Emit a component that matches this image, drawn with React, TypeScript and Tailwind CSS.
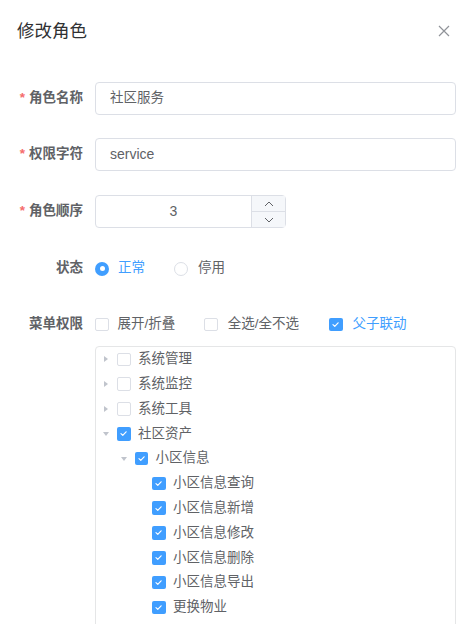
import React from "react";

const FONT = '"Liberation Sans", "Noto Sans CJK SC", sans-serif';

type Node = { label: string; level: number; arrow: "right" | "down" | "none"; checked: boolean };

const tree: Node[] = [
  { label: "系统管理", level: 0, arrow: "right", checked: false },
  { label: "系统监控", level: 0, arrow: "right", checked: false },
  { label: "系统工具", level: 0, arrow: "right", checked: false },
  { label: "社区资产", level: 0, arrow: "down", checked: true },
  { label: "小区信息", level: 1, arrow: "down", checked: true },
  { label: "小区信息查询", level: 2, arrow: "none", checked: true },
  { label: "小区信息新增", level: 2, arrow: "none", checked: true },
  { label: "小区信息修改", level: 2, arrow: "none", checked: true },
  { label: "小区信息删除", level: 2, arrow: "none", checked: true },
  { label: "小区信息导出", level: 2, arrow: "none", checked: true },
  { label: "更换物业", level: 2, arrow: "none", checked: true },
];

function Checkbox({ checked }: { checked: boolean }) {
  if (checked) {
    return (
      <span className="flex h-[13.5px] w-[13.5px] shrink-0 items-center justify-center rounded-[2px] bg-[#409eff]">
        <svg width="9" height="9" viewBox="0 0 10 10" fill="none">
          <path d="M2.2 5.2 L4.2 7.1 L7.9 3.1" stroke="white" strokeWidth="1.3" strokeLinecap="round" strokeLinejoin="round" />
        </svg>
      </span>
    );
  }
  return <span className="h-[13.5px] w-[13.5px] shrink-0 rounded-[2px] border border-[#dcdfe6] bg-white" />;
}

function Label({ text, required }: { text: string; required?: boolean }) {
  return (
    <div className="flex h-[33px] w-[77px] shrink-0 items-center justify-end pr-[12px] text-[13.5px] font-bold text-[#606266]">
      {required && <span className="mr-[4px] text-[#f56c6c]">*</span>}
      {text}
    </div>
  );
}

function Arrow({ dir }: { dir: "right" | "down" | "none" }) {
  if (dir === "none") return <span className="w-[12px] shrink-0" />;
  return (
    <span className="flex w-[12px] shrink-0 items-center justify-center">
      <svg width="8" height="8" viewBox="0 0 8 8">
        {dir === "right" ? <path d="M2 1 L6 4 L2 7 Z" fill="#c0c4cc" /> : <path d="M1 2 L7 2 L4 6 Z" fill="#c0c4cc" />}
      </svg>
    </span>
  );
}

export default function App() {
  return (
    <div className="h-[624px] w-[474px] overflow-hidden bg-white" style={{ fontFamily: FONT }}>
      {/* 标题 */}
      <div className="flex items-center justify-between px-[17px] pt-[19px]">
        <span className="text-[17.5px] leading-[24px] text-[#303133]">修改角色</span>
        <svg width="12" height="12" viewBox="0 0 12 12" className="mr-[7px]">
          <path d="M1 1 L11 11 M11 1 L1 11" stroke="#909399" strokeWidth="1.2" />
        </svg>
      </div>

      <div className="px-[18px] pt-[39px]">
        {/* 角色名称 */}
        <div className="flex">
          <Label text="角色名称" required />
          <div className="flex h-[33px] flex-1 items-center rounded-[4px] border border-[#dcdfe6] px-[14px] text-[13.5px] text-[#606266]">
            社区服务
          </div>
        </div>

        {/* 权限字符 */}
        <div className="mt-[23px] flex">
          <Label text="权限字符" required />
          <div className="flex h-[33px] flex-1 items-center rounded-[4px] border border-[#dcdfe6] px-[14px] text-[14px] text-[#606266]">
            service
          </div>
        </div>

        {/* 角色顺序 */}
        <div className="mt-[24px] flex">
          <Label text="角色顺序" required />
          <div className="flex h-[33px] w-[191px] rounded-[4px] border border-[#dcdfe6]">
            <div className="flex flex-1 items-center justify-center text-[14px] text-[#606266]">3</div>
            <div className="flex w-[34px] flex-col border-l border-[#dcdfe6] bg-[#f5f7fa]">
              <div className="flex flex-1 items-center justify-center border-b border-[#dcdfe6]">
                <svg width="10" height="6" viewBox="0 0 10 6">
                  <path d="M1 5 L5 1 L9 5" stroke="#606266" strokeWidth="1" fill="none" />
                </svg>
              </div>
              <div className="flex flex-1 items-center justify-center">
                <svg width="10" height="6" viewBox="0 0 10 6">
                  <path d="M1 1 L5 5 L9 1" stroke="#606266" strokeWidth="1" fill="none" />
                </svg>
              </div>
            </div>
          </div>
        </div>

        {/* 状态 */}
        <div className="mt-[24px] flex">
          <Label text="状态" />
          <div className="flex h-[33px] items-center text-[13.5px]">
            <span className="flex h-[14px] w-[14px] items-center justify-center rounded-full bg-[#409eff]">
              <span className="h-[5px] w-[5px] rounded-full bg-white" />
            </span>
            <span className="ml-[9px] text-[#409eff]">正常</span>
            <span className="ml-[29px] h-[14px] w-[14px] rounded-full border border-[#dcdfe6]" />
            <span className="ml-[10px] text-[#606266]">停用</span>
          </div>
        </div>

        {/* 菜单权限 */}
        <div className="mt-[23px] flex">
          <Label text="菜单权限" />
          <div className="flex-1">
            <div className="flex h-[33px] items-center text-[13.5px] text-[#606266]">
              <Checkbox checked={false} />
              <span className="ml-[9px]">展开/折叠</span>
              <span className="ml-[29px]" />
              <Checkbox checked={false} />
              <span className="ml-[10px]">全选/全不选</span>
              <span className="ml-[30px]" />
              <Checkbox checked />
              <span className="ml-[10px] text-[#409eff]">父子联动</span>
            </div>
            <div className="mt-[5px] h-[400px] rounded-[4px] border border-[#e5e6e7] bg-white">
              {tree.map((n) => (
                <div
                  key={n.label}
                  className="flex h-[24.8px] items-center text-[13.5px] text-[#606266]"
                  style={{ paddingLeft: 4 + n.level * 17.5 }}
                >
                  <Arrow dir={n.arrow} />
                  <span className="ml-[5px]" />
                  <Checkbox checked={n.checked} />
                  <span className="ml-[7.5px]">{n.label}</span>
                </div>
              ))}
            </div>
          </div>
        </div>
      </div>
    </div>
  );
}
